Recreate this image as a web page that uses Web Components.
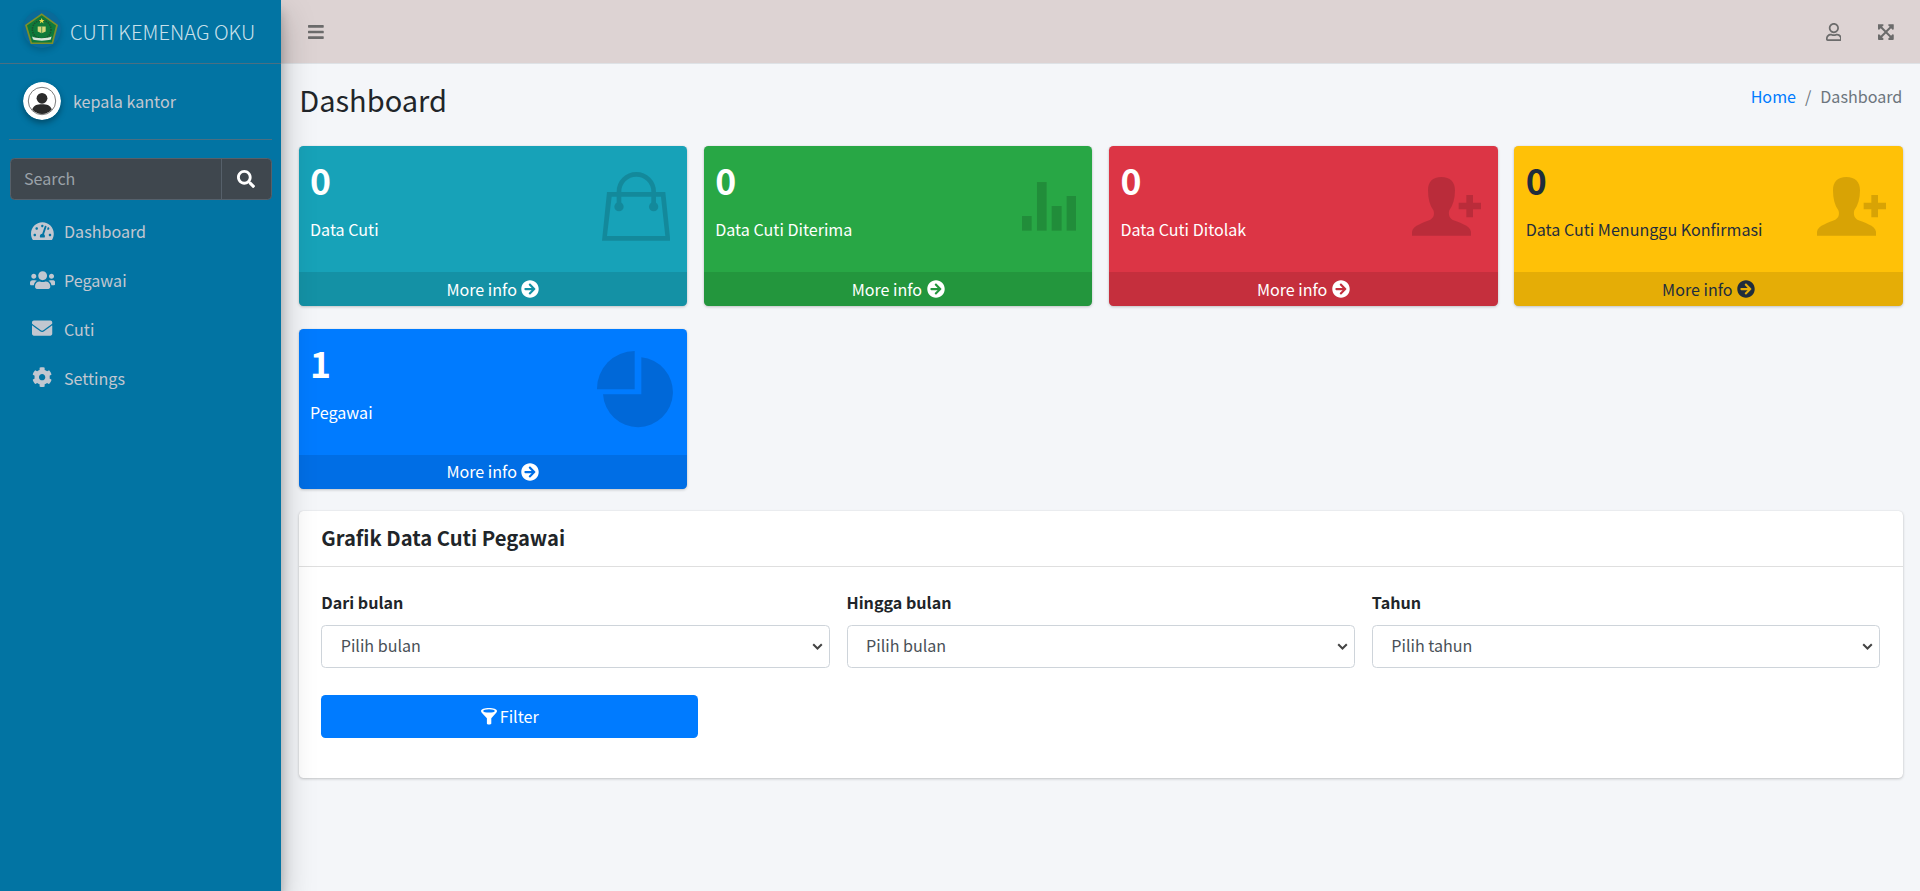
<!DOCTYPE html>
<html lang="id">
<head>
<meta charset="utf-8">
<title>Dashboard</title>
<style>
  html, body { margin: 0; height: 100%; }
  body { font: 400 16.1px/27px "Noto Sans CJK SC", "Source Sans Pro", "Noto Sans", sans-serif; color: #212529; background: #f4f6f9; overflow: hidden; }
</style>
</head>
<body>
<admin-app>
  <side-bar slot="sidebar">
    <side-item icon="dashboard">Dashboard</side-item>
    <side-item icon="users">Pegawai</side-item>
    <side-item icon="envelope">Cuti</side-item>
    <side-item icon="cog">Settings</side-item>
  </side-bar>
  <top-bar slot="topbar"></top-bar>
  <page-header title="Dashboard"></page-header>
  <box-grid>
    <small-box value="0" label="Data Cuti" color="#17a2b8" art="bag"></small-box>
    <small-box value="0" label="Data Cuti Diterima" color="#28a745" art="bars"></small-box>
    <small-box value="0" label="Data Cuti Ditolak" color="#dc3545" art="person"></small-box>
    <small-box value="0" label="Data Cuti Menunggu Konfirmasi" color="#ffc107" dark art="person"></small-box>
    <small-box value="1" label="Pegawai" color="#007bff" art="pie"></small-box>
  </box-grid>
  <chart-card title="Grafik Data Cuti Pegawai">
    <select-field label="Dari bulan" placeholder="Pilih bulan"></select-field>
    <select-field label="Hingga bulan" placeholder="Pilih bulan"></select-field>
    <select-field label="Tahun" placeholder="Pilih tahun"></select-field>
  </chart-card>
</admin-app>

<script>
// font awesome 5 shapes, [viewBox width, path]
const FA = {
  dashboard: [576, 'M288 32C128.94 32 0 160.94 0 320c0 52.8 14.25 102.26 39.06 144.8 5.61 9.62 16.3 15.2 27.44 15.2h443c11.14 0 21.83-5.58 27.44-15.2C561.75 422.26 576 372.8 576 320c0-159.06-128.94-288-288-288zm0 64c14.71 0 26.58 10.13 30.32 23.65-1.11 2.26-2.64 4.23-3.45 6.67l-9.22 27.67c-5.13 3.49-10.97 6.01-17.64 6.01-17.67 0-32-14.33-32-32S270.33 96 288 96zM96 384c-17.67 0-32-14.33-32-32s14.33-32 32-32 32 14.33 32 32-14.33 32-32 32zm48-160c-17.67 0-32-14.33-32-32s14.33-32 32-32 32 14.33 32 32-14.33 32-32 32zm246.77-72.41l-61.33 184C343.13 347.33 352 364.54 352 384c0 11.72-3.38 22.55-8.88 32H232.88c-5.5-9.45-8.88-20.28-8.88-32 0-33.94 26.5-61.43 59.9-63.59l61.34-184.01c4.17-12.56 17.73-19.45 30.36-15.17 12.57 4.19 19.35 17.79 15.17 30.36zm14.66 57.2l15.52-46.55c3.47-1.29 7.13-2.23 11.05-2.23 17.67 0 32 14.33 32 32s-14.33 32-32 32c-11.38-.01-20.89-6.28-26.57-15.22zM480 384c-17.67 0-32-14.33-32-32s14.33-32 32-32 32 14.33 32 32-14.33 32-32 32z'],
  users: [640, 'M96 224c35.3 0 64-28.7 64-64s-28.7-64-64-64-64 28.7-64 64 28.7 64 64 64zm448 0c35.3 0 64-28.7 64-64s-28.7-64-64-64-64 28.7-64 64 28.7 64 64 64zm32 32h-64c-17.6 0-33.5 7.1-45.1 18.6 40.3 22.1 68.9 62 75.1 109.4h66c17.7 0 32-14.3 32-32v-32c0-35.3-28.7-64-64-64zm-256 0c61.9 0 112-50.1 112-112S381.9 32 320 32 208 82.1 208 144s50.1 112 112 112zm76.8 32h-8.3c-20.8 10-43.9 16-68.5 16s-47.6-6-68.5-16h-8.3C179.6 288 128 339.6 128 403.2V432c0 26.5 21.5 48 48 48h288c26.5 0 48-21.5 48-48v-28.8c0-63.6-51.6-115.2-115.2-115.2zm-223.7-13.4C161.5 263.1 145.6 256 128 256H64c-35.3 0-64 28.7-64 64v32c0 17.7 14.3 32 32 32h65.9c6.3-47.4 34.9-87.3 75.2-109.4z'],
  envelope: [512, 'M502.3 190.8c3.9-3.1 9.7-.2 9.7 4.7V400c0 26.5-21.5 48-48 48H48c-26.5 0-48-21.5-48-48V195.6c0-5 5.7-7.8 9.7-4.7 22.4 17.4 52.1 39.5 154.1 113.6 21.1 15.4 56.7 47.8 92.2 47.6 35.7.3 72-32.8 92.3-47.6 102-74.1 131.6-96.3 154-113.7zM256 320c23.2.4 56.6-29.2 73.4-41.4 132.7-96.3 142.8-104.7 173.4-128.7 5.8-4.5 9.2-11.5 9.2-18.9v-19c0-26.5-21.5-48-48-48H48C21.5 64 0 85.5 0 112v19c0 7.4 3.4 14.3 9.2 18.9 30.6 23.9 40.7 32.4 173.4 128.7 16.8 12.2 50.2 41.8 73.4 41.4z'],
  cog: [512, 'M487.4 315.7l-42.6-24.6c4.3-23.2 4.3-47 0-70.2l42.6-24.6c4.9-2.8 7.1-8.6 5.5-14-11.1-35.6-30-67.8-54.7-94.6-3.8-4.1-10-5.1-14.8-2.3L380.8 110c-17.9-15.4-38.5-27.3-60.8-35.1V25.8c0-5.6-3.9-10.5-9.4-11.7-36.7-8.2-74.3-7.8-109.2 0-5.5 1.2-9.4 6.1-9.4 11.7V75c-22.2 7.9-42.8 19.8-60.8 35.1L88.7 85.5c-4.9-2.8-11-1.9-14.8 2.3-24.7 26.7-43.6 58.9-54.7 94.6-1.7 5.4.6 11.2 5.5 14L67.3 221c-4.3 23.2-4.3 47 0 70.2l-42.6 24.6c-4.9 2.8-7.1 8.6-5.5 14 11.1 35.6 30 67.8 54.7 94.6 3.8 4.1 10 5.1 14.8 2.3l42.6-24.6c17.9 15.4 38.5 27.3 60.8 35.1v49.2c0 5.6 3.9 10.5 9.4 11.7 36.7 8.2 74.3 7.8 109.2 0 5.5-1.2 9.4-6.1 9.4-11.7v-49.2c22.2-7.9 42.8-19.8 60.8-35.1l42.6 24.6c4.9 2.8 11 1.9 14.8-2.3 24.7-26.7 43.6-58.9 54.7-94.6 1.5-5.5-.7-11.3-5.6-14.1zM256 336c-44.1 0-80-35.9-80-80s35.9-80 80-80 80 35.9 80 80-35.9 80-80 80z'],
  search: [512, 'M505 442.7L405.3 343c-4.5-4.5-10.6-7-17-7H372c27.6-35.3 44-79.7 44-128C416 93.1 322.9 0 208 0S0 93.1 0 208s93.1 208 208 208c48.3 0 92.7-16.4 128-44v16.3c0 6.4 2.5 12.5 7 17l99.7 99.7c9.4 9.4 24.6 9.4 33.9 0l28.3-28.3c9.4-9.4 9.4-24.6.1-34zM208 336c-70.7 0-128-57.2-128-128 0-70.7 57.2-128 128-128 70.7 0 128 57.2 128 128 0 70.7-57.2 128-128 128z'],
  arrow: [512, 'M256 8c137 0 248 111 248 248S393 504 256 504 8 393 8 256 119 8 256 8zm-28.9 143.6l75.5 72.4H120c-13.3 0-24 10.7-24 24v16c0 13.3 10.7 24 24 24h182.6l-75.5 72.4c-9.7 9.3-9.9 24.8-.4 34.3l11 10.9c9.4 9.4 24.6 9.4 33.9 0L404.3 273c9.4-9.4 9.4-24.6 0-33.9L271.6 106.3c-9.4-9.4-24.6-9.4-33.9 0l-11 10.9c-9.5 9.6-9.3 25.1.4 34.4z'],
  bars: [448, 'M16 132h416c8.837 0 16-7.163 16-16V76c0-8.837-7.163-16-16-16H16C7.163 60 0 67.163 0 76v40c0 8.837 7.163 16 16 16zm0 160h416c8.837 0 16-7.163 16-16v-40c0-8.837-7.163-16-16-16H16c-8.837 0-16 7.163-16 16v40c0 8.837 7.163 16 16 16zm0 160h416c8.837 0 16-7.163 16-16v-40c0-8.837-7.163-16-16-16H16c-8.837 0-16 7.163-16 16v40c0 8.837 7.163 16 16 16z'],
  expand: [448, 'M448 344v112a23.94 23.94 0 0 1-24 24H312c-21.39 0-32.09-25.9-17-41l36.2-36.2L224 295.6 116.77 402.9 153 439c15.09 15.1 4.39 41-17 41H24a23.94 23.94 0 0 1-24-24V344c0-21.4 25.89-32.1 41-17l36.19 36.2L184.46 256 77.18 148.7 41 185c-15.1 15.1-41 4.4-41-17V56a23.94 23.94 0 0 1 24-24h112c21.39 0 32.09 25.9 17 41l-36.2 36.2L224 216.4l107.23-107.3L295 73c-15.09-15.1-4.39-41 17-41h112a23.94 23.94 0 0 1 24 24v112c0 21.4-25.89 32.1-41 17l-36.19-36.2L263.54 256l107.28 107.3L407 327.1c15.1-15.2 41-4.5 41 16.9z'],
  user: [448, 'M313.6 304c-28.7 0-42.5 16-89.6 16-47.1 0-60.8-16-89.6-16C60.2 304 0 364.2 0 438.4V464c0 26.5 21.5 48 48 48h352c26.5 0 48-21.5 48-48v-25.6c0-74.2-60.2-134.4-134.4-134.4zM400 464H48v-25.6c0-47.6 38.8-86.4 86.4-86.4 14.6 0 38.3 16 89.6 16 51.7 0 74.9-16 89.6-16 47.6 0 86.4 38.8 86.4 86.4V464zM224 288c79.5 0 144-64.5 144-144S303.5 0 224 0 80 64.5 80 144s64.5 144 144 144zm0-240c52.9 0 96 43.1 96 96s-43.1 96-96 96-96-43.1-96-96 43.1-96 96-96z']
};

const faIcon = (name, size) => {
  const [w, d] = FA[name];
  return `<svg xmlns="http://www.w3.org/2000/svg" viewBox="0 0 ${w} 512" width="${size * w / 512}" height="${size}" fill="currentColor" style="display:block;flex:none"><path d="${d}"/></svg>`;
};

// ionicons from the small boxes, redrawn; coordinates are 3x page pixels
const ART = {
  bag: { right: 17, top: 26, vb: '935 126 205 206', w: 68.3, h: 68.7, body: `
    <path fill-rule="evenodd" d="M950 186H1125L1140 332H935ZM964 200L950 318H1125L1112 200Z"/>
    <path d="M986 230V185A52 52 0 0 1 1090 185V230" fill="none" stroke="#000" stroke-width="14"/>
    <circle cx="986" cy="230" r="14"/><circle cx="1090" cy="230" r="14"/>` },
  bars: { right: 16.5, top: 36, vb: '964 156 163 146', w: 54.3, h: 48.7, body: `
    <rect x="964" y="258" width="29" height="44"/><rect x="1009" y="156" width="29" height="146"/>
    <rect x="1053" y="228" width="30" height="74"/><rect x="1098" y="198" width="29" height="104"/>` },
  person: { right: 16.5, top: 30.7, vb: '935 140 207 176', w: 69, h: 58.7, body: `
    <path d="M1023 140C1050 140 1064 155 1064 180C1064 205 1058 225 1047 240C1044 250 1046 262 1056 268C1075 276 1110 285 1112 304V316H935V304C937 285 972 276 990 268C1001 262 1003 250 999 240C988 225 983 205 983 180C983 155 996 140 1023 140Z"/>
    <path d="M1098 194H1118V217H1142V237H1118V261H1098V237H1075V217H1098Z"/>` },
  pie: { right: 14, top: 22.7, vb: '922 92 228 229', w: 76, h: 76.3, body: `
    <path d="M1035 92A113 113 0 0 0 922 207H1035Z"/>
    <path d="M1055 111A105 105 0 1 1 940 222H1055Z"/>` }
};

class AdminApp extends HTMLElement {
  constructor() {
    super();
    this.attachShadow({ mode: 'open' }).innerHTML = `
      <style>
        :host { display: grid; grid-template-columns: 281.25px 1fr; grid-template-rows: 64px 1fr; height: 891px; }
        .side { grid-row: 1 / 3; z-index: 2; box-shadow: 0 16px 32px rgba(0,0,0,.25), 0 11px 11px rgba(0,0,0,.22); display: block; }
        main { padding: 0 17.25px 0 17.5px; min-width: 0; }
      </style>
      <slot class="side" name="sidebar"></slot>
      <slot name="topbar"></slot>
      <main><slot></slot></main>`;
  }
}

class SideBar extends HTMLElement {
  constructor() {
    super();
    this.attachShadow({ mode: 'open' }).innerHTML = `
      <style>
        :host { display: block; height: 100%; background: #0274a3; color: #c2c7d0; }
        .brand { height: 63px; border-bottom: 1px solid #4b6f82; display: flex; align-items: center; padding-left: 23px; box-sizing: content-box; color: rgba(255,255,255,.8); }
        .brand svg { flex: none; margin-top: -5px; border-radius: 50%; box-shadow: 0 3px 6px rgba(0,0,0,.16); }
        .brand span { margin-left: 9px; font-size: 20.2px; font-weight: 300; white-space: nowrap; line-height: 34px; }
        .user { margin: 18px 9px 0; padding-left: 14px; height: 57px; border-bottom: 1px solid #4b6f82; display: flex; align-items: flex-start; }
        .user svg { flex: none; border-radius: 50%; box-shadow: 0 3px 6px rgba(0,0,0,.35); }
        .user span { margin-left: 12px; line-height: 38px; }
        .search { margin: 18px 9.5px 0; height: 41.5px; display: flex; background: #3f474e; border: 1px solid #56606a; border-radius: 4.5px; box-sizing: border-box; }
        .search span { flex: 1; padding-left: 13.5px; line-height: 39px; color: #9aa1a8; }
        .search i { width: 49.5px; border-left: 1px solid #56606a; display: flex; align-items: center; justify-content: center; color: #fff; padding-right: 2px; box-sizing: border-box; }
        nav { display: block; margin-top: 8px; }
      </style>
      <div class="brand">
        <svg width="38" height="38" viewBox="0 0 38 38" style="background:#0a6a99">
          <path d="M18.7 3.3 35 15 30 34H7.7L2 15Z" fill="#7d8f2a"/>
          <path d="M18.7 5.3 33 15.6 28.7 32.6H9L4 15.6Z" fill="#0e7a3a"/>
          <circle cx="18.7" cy="19.5" r="9.3" fill="none" stroke="#1c4f2e" stroke-width="1.5" stroke-dasharray="1.5 1"/>
          <path d="M18.7 8l.8 2h2.1l-1.7 1.3.7 2.1-1.9-1.3-1.9 1.3.7-2.1-1.7-1.3h2.1Z" fill="#e8dd4a"/>
          <path d="M14.7 16.5h8v5l-4 1.7-4-1.7Z" fill="#d3d67a"/>
          <path d="M18.7 16.5v6.7" stroke="#0e7a3a" stroke-width=".7"/>
          <path d="M9 26.5C13 28.8 24 28.8 28.6 26.5L27.8 29.6C23.5 31 14 31 10 29.6Z" fill="#d9e6d9"/>
        </svg>
        <span>CUTI KEMENAG OKU</span>
      </div>
      <div class="user">
        <svg width="38" height="38" viewBox="0 0 38 38">
          <circle cx="19" cy="19" r="19" fill="#fff"/>
          <circle cx="19" cy="19" r="13.7" fill="#fff" stroke="#6c6c6c" stroke-width=".9"/>
          <circle cx="19" cy="16.3" r="5.4" fill="#2b2b2b"/>
          <path d="M9.2 27.6C10.5 23.4 14 22.2 19 22.2S27.5 23.4 28.8 27.6C26 30.6 22.8 32 19 32S12 30.6 9.2 27.6Z" fill="#2b2b2b"/>
        </svg>
        <span>kepala kantor</span>
      </div>
      <div class="search"><span>Search</span><i>${faIcon('search', 18)}</i></div>
      <nav><slot></slot></nav>`;
  }
}

class SideItem extends HTMLElement {
  constructor() {
    super();
    const name = this.getAttribute('icon');
    this.attachShadow({ mode: 'open' }).innerHTML = `
      <style>
        :host { display: flex; align-items: center; height: 48.75px; padding-left: 28.5px; color: #c2c7d0; }
        i { width: 28px; display: flex; justify-content: center; margin: -2px 7.5px 0 0; }
      </style>
      <i>${faIcon(name, 20.25)}</i><slot></slot>`;
  }
}

class TopBar extends HTMLElement {
  constructor() {
    super();
    this.attachShadow({ mode: 'open' }).innerHTML = `
      <style>
        :host { display: flex; height: 64px; box-sizing: border-box; align-items: center; padding: 0 26.5px 0 27px; background: #ddd3d3; border-bottom: 1px solid #dee2e6; color: #6b6b6b; }
        .grow { flex: 1; }
        .user { margin-right: 36.5px; }
      </style>
      ${faIcon('bars', 18)}
      <div class="grow"></div>
      <div class="user">${faIcon('user', 18)}</div>
      ${faIcon('expand', 18)}`;
  }
}

class PageHeader extends HTMLElement {
  constructor() {
    super();
    this.attachShadow({ mode: 'open' }).innerHTML = `
      <style>
        :host { display: flex; align-items: flex-start; justify-content: space-between; padding: 16.875px .5px 18.875px .5px; margin-bottom: 9.5px; }
        h1 { margin: 0; font-size: 29px; font-weight: 400; line-height: 36.9px; color: #212529; }
        .crumb { color: #6c757d; margin-top: 2px; }
        .crumb a { color: #007bff; }
        .crumb b { font-weight: 400; padding: 0 9px; }
      </style>
      <h1>${this.getAttribute('title')}</h1>
      <div class="crumb"><a>Home</a><b>/</b>Dashboard</div>`;
  }
}

class BoxGrid extends HTMLElement {
  constructor() {
    super();
    this.attachShadow({ mode: 'open' }).innerHTML = `
      <style>
        :host { display: grid; grid-template-columns: repeat(4, 1fr); column-gap: 16.875px; row-gap: 22.5px; }
      </style>
      <slot></slot>`;
  }
}

class SmallBox extends HTMLElement {
  constructor() {
    super();
    const art = ART[this.getAttribute('art')];
    const dark = this.hasAttribute('dark');
    this.attachShadow({ mode: 'open' }).innerHTML = `
      <style>
        :host { display: block; position: relative; height: 160px; border-radius: 4.5px; overflow: hidden; box-shadow: 0 0 1px rgba(0,0,0,.125), 0 1px 3px rgba(0,0,0,.2); background: ${this.getAttribute('color')}; color: ${dark ? '#1f2d3d' : '#fff'}; }
        .inner { padding: 11.25px; }
        h3 { margin: 0 0 13.25px; font-size: 35.6px; font-weight: 700; line-height: 45.5px; }
        p { margin: 0 0 18px; }
        .art { position: absolute; right: ${art.right}px; top: ${art.top}px; opacity: .15; }
        .art svg { display: block; fill: #000; }
        footer { display: flex; justify-content: center; align-items: center; gap: 4.5px; height: 33.75px; background: rgba(0,0,0,.1); color: ${dark ? '#1f2d3d' : '#fff'}; }
      </style>
      <div class="inner">
        <h3>${this.getAttribute('value')}</h3>
        <p>${this.getAttribute('label')}</p>
      </div>
      <div class="art"><svg viewBox="${art.vb}" width="${art.w}" height="${art.h}">${art.body}</svg></div>
      <footer>More info ${faIcon('arrow', 18)}</footer>`;
  }
}

class ChartCard extends HTMLElement {
  constructor() {
    super();
    this.attachShadow({ mode: 'open' }).innerHTML = `
      <style>
        :host { display: block; margin-top: 22.5px; height: 266.75px; background: #fff; border-radius: 4.5px; box-shadow: 0 0 1px rgba(0,0,0,.125), 0 1px 3px rgba(0,0,0,.2); }
        header { height: 55.5px; box-sizing: border-box; padding: 0 22.5px; border-bottom: 1px solid rgba(0,0,0,.125); display: flex; align-items: center; }
        h5 { margin: 0; font-size: 20.2px; font-weight: 700; line-height: 26px; }
        .body { padding: 22.5px; }
        .row { display: grid; grid-template-columns: repeat(3, 1fr); column-gap: 16.875px; }
        button { display: flex; align-items: center; justify-content: center; gap: 3px; margin-top: 27px; width: 377px; height: 42.75px; padding: 0; border: 0; border-radius: 4.5px; background: #007bff; color: #fff; font: inherit; }
        button svg { display: block; margin-top: 0; }
      </style>
      <header><h5>${this.getAttribute('title')}</h5></header>
      <div class="body">
        <div class="row"><slot></slot></div>
        <button><svg width="16" height="17" viewBox="0 0 16 17"><path fill="#fff" fill-rule="evenodd" d="M8 0C12.4 0 16 1.2 16 3 16 3.9 15.6 4.4 15 5L10.3 10.2V15.4C10.3 16.6 5.9 17 5.9 15.4V10.2L1 5C.4 4.4 0 3.9 0 3 0 1.2 3.6 0 8 0ZM8 1.3C4.8 1.3 2.2 2 2.2 3S4.8 4.6 8 4.6 13.8 4 13.8 3 11.2 1.3 8 1.3Z"/></svg>Filter</button>
      </div>`;
  }
}

class SelectField extends HTMLElement {
  constructor() {
    super();
    this.attachShadow({ mode: 'open' }).innerHTML = `
      <style>
        :host { display: block; }
        label { display: block; font-weight: 700; margin-bottom: 9px; }
        .wrap { position: relative; }
        select { display: block; width: 100%; height: 42.75px; box-sizing: border-box; padding: 0 30px 2px 18.5px; appearance: none; background: #fff; color: #495057; border: 1px solid #ced4da; border-radius: 4.5px; font: inherit; }
        svg { position: absolute; right: 7px; top: 17.5px; pointer-events: none; }
      </style>
      <label>${this.getAttribute('label')}</label>
      <div class="wrap">
        <select><option>${this.getAttribute('placeholder')}</option></select>
        <svg width="11" height="7" viewBox="0 0 11 7"><path d="M1.2 1.2 5.5 5.5 9.8 1.2" fill="none" stroke="#444" stroke-width="2"/></svg>
      </div>`;
  }
}

customElements.define('admin-app', AdminApp);
customElements.define('side-bar', SideBar);
customElements.define('side-item', SideItem);
customElements.define('top-bar', TopBar);
customElements.define('page-header', PageHeader);
customElements.define('box-grid', BoxGrid);
customElements.define('small-box', SmallBox);
customElements.define('chart-card', ChartCard);
customElements.define('select-field', SelectField);
</script>
</body>
</html>
